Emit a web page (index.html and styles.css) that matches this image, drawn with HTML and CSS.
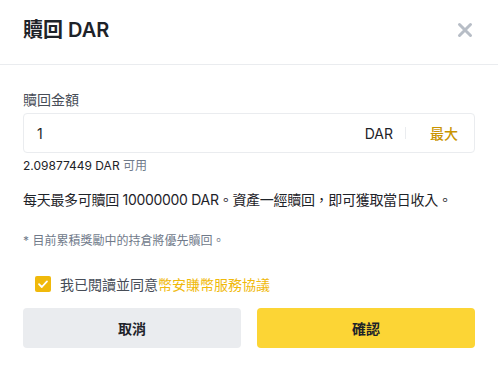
FILE: index.html
```html
<!DOCTYPE html>
<html lang="zh-Hant">
<head>
  <meta charset="UTF-8">
  <title>贖回 DAR</title>
  <link rel="stylesheet" href="styles.css">
</head>
<body>
  <div class="modal">
    <div class="modal-header">
      <h1 class="modal-title">贖回 DAR</h1>
      <svg class="close-icon" width="16" height="16" viewBox="0 0 16 16">
        <path d="M2.5 2.5 L13.5 13.5 M13.5 2.5 L2.5 13.5" stroke="#b7bdc6" stroke-width="3" stroke-linecap="round"/>
      </svg>
    </div>

    <div class="modal-body">
      <div class="field-label">贖回金額</div>
      <div class="amount-box">
        <span class="amount-value">1</span>
        <span class="amount-unit">DAR</span>
        <span class="amount-sep"></span>
        <span class="amount-max">最大</span>
      </div>
      <div class="available">2.09877449 DAR <span class="muted">可用</span></div>

      <p class="info">每天最多可贖回 10000000 DAR。資產一經贖回，即可獲取當日收入。</p>
      <p class="note">* 目前累積獎勵中的持倉將優先贖回。</p>

      <div class="agree">
        <span class="checkbox">
          <svg width="12" height="12" viewBox="0 0 12 12">
            <path d="M2 6.2 L4.8 9 L10 3.4" fill="none" stroke="#fff" stroke-width="1.8" stroke-linecap="round" stroke-linejoin="round"/>
          </svg>
        </span>
        <span>我已閱讀並同意<a class="link">幣安賺幣服務協議</a></span>
      </div>

      <div class="actions">
        <button class="btn btn-cancel">取消</button>
        <button class="btn btn-confirm">確認</button>
      </div>
    </div>
  </div>
</body>
</html>
```

FILE: styles.css
```css
body {
  margin: 0;
  background: #fff;
  font-family: "Inter", "Noto Sans CJK TC", sans-serif;
  color: #1e2329;
}

.modal {
  width: 498px;
}

.modal-header {
  height: 65px;
  box-sizing: border-box;
  padding: 0 25px 4px 23px;
  display: flex;
  align-items: center;
  justify-content: space-between;
  border-bottom: 1px solid #eaecef;
}

.modal-title {
  margin: 0;
  font-size: 20px;
  font-weight: 600;
  line-height: 24px;
}

.close-icon {
  display: block;
}

.modal-body {
  padding: 0 23px;
}

.field-label {
  margin-top: 25px;
  font-size: 14px;
  line-height: 20px;
  color: #474d57;
}

.amount-box {
  margin-top: 3px;
  height: 40px;
  box-sizing: border-box;
  border: 1px solid #eaecef;
  border-radius: 4px;
  display: flex;
  align-items: center;
  padding: 0 16px 0 13px;
  font-size: 14px;
}

.amount-value {
  flex: 1;
}

.amount-unit {
  color: #1e2329;
}

.amount-sep {
  width: 1px;
  height: 12px;
  background: #eaecef;
  margin: 0 12px;
}

.amount-max {
  color: #c99400;
  font-weight: 500;
  margin-left: 12px;
}

.available {
  margin-top: 5px;
  font-size: 12px;
  line-height: 16px;
}

.muted {
  color: #707a8a;
}

.info {
  margin: 16px 0 0;
  font-size: 14px;
  line-height: 20px;
  letter-spacing: -0.3px;
}

.note {
  margin: 23px 0 0;
  font-size: 12px;
  line-height: 16px;
  color: #707a8a;
}

.agree {
  margin-top: 25px;
  padding-left: 12px;
  height: 20px;
  display: flex;
  align-items: center;
  font-size: 14px;
  color: #474d57;
}

.checkbox {
  width: 16px;
  height: 16px;
  border-radius: 2px;
  background: #f0b90b;
  display: flex;
  align-items: center;
  justify-content: center;
  margin-right: 9px;
}

.link {
  color: #f0b90b;
}

.actions {
  margin-top: 14px;
  display: flex;
  gap: 16px;
}

.btn {
  flex: 1;
  height: 40px;
  border: none;
  border-radius: 4px;
  font-family: inherit;
  font-size: 14px;
  font-weight: 600;
  color: #1e2329;
}

.btn-cancel {
  background: #eaecef;
}

.btn-confirm {
  background: #fcd535;
}
```
